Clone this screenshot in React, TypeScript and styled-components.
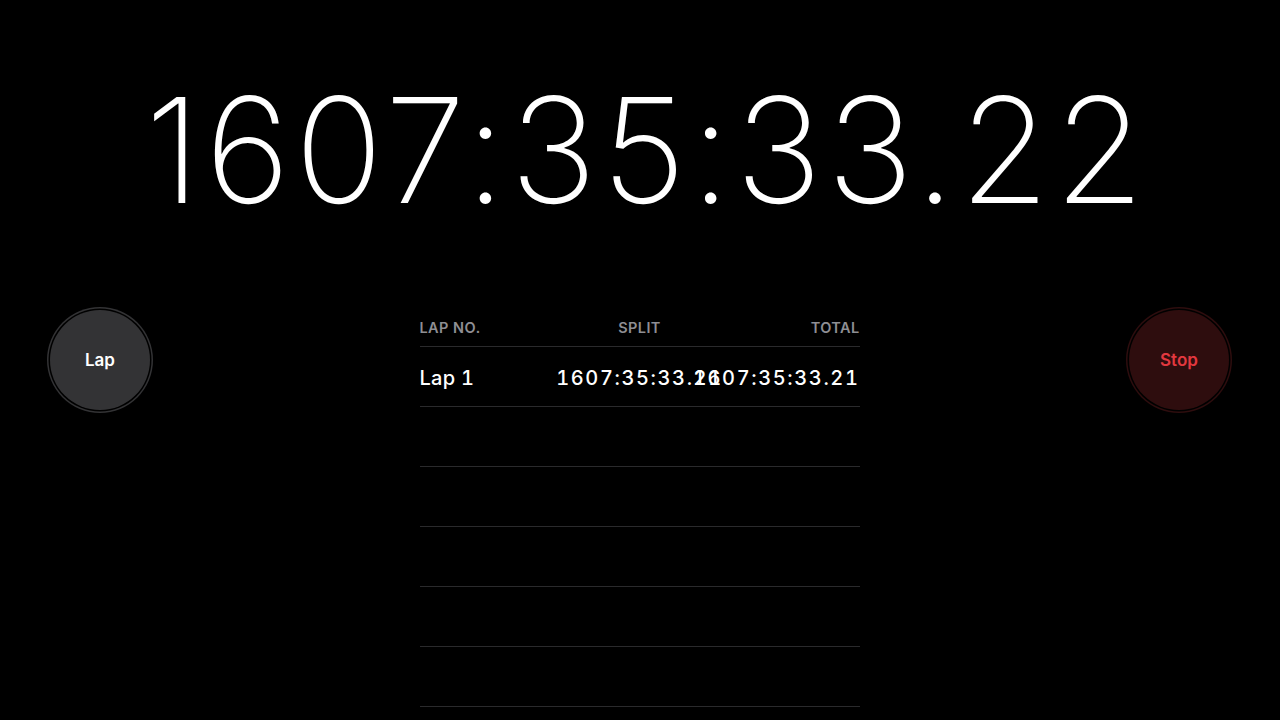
import React from "react";
import styled, { createGlobalStyle } from "styled-components";

const Global = createGlobalStyle`
  html, body { margin: 0; padding: 0; background: #000; }
  body { font-family: Inter, "Noto Sans", "Liberation Sans", sans-serif; color: #fff; }
  * { box-sizing: border-box; }
`;

const Page = styled.div`
  width: 1280px;
  height: 720px;
  overflow: hidden;
  display: flex;
  flex-direction: column;
  background: #000;
`;

const Timer = styled.div`
  padding-top: 77px;
  padding-left: 14px;
  height: 307px;
  display: flex;
  justify-content: center;
  font-size: 146px;
  line-height: 146px;
  font-weight: 200;
  letter-spacing: 4.6px;
  color: #fff;
  white-space: nowrap;
`;

const Controls = styled.div`
  display: grid;
  grid-template-columns: 1fr 440px 1fr;
  padding: 0 48px 0 47px;
  align-items: start;
`;

const RoundButton = styled.button<{ $variant: "lap" | "stop" }>`
  width: 100px;
  height: 100px;
  margin: 3px;
  border-radius: 50%;
  border: none;
  justify-self: ${(p) => (p.$variant === "lap" ? "start" : "end")};
  background: ${(p) => (p.$variant === "lap" ? "#333335" : "#2e0d0e")};
  box-shadow: 0 0 0 1.5px #000,
    0 0 0 3px ${(p) => (p.$variant === "lap" ? "#333335" : "#2e0d0e")};
  color: ${(p) => (p.$variant === "lap" ? "#fff" : "#e2383f")};
  font-family: Inter, "Noto Sans", sans-serif;
  font-size: 17px;
  font-weight: 600;
  padding: 0;
`;

const Table = styled.div`
  display: flex;
  flex-direction: column;
`;

const Row = styled.div<{ $header?: boolean }>`
  display: grid;
  grid-template-columns: repeat(3, minmax(0, 1fr));
  align-items: center;
  height: ${(p) => (p.$header ? "40px" : "60px")};
  border-bottom: 1px solid #2a2a2c;
  font-size: ${(p) => (p.$header ? "14.5px" : "20px")};
  font-weight: ${(p) => (p.$header ? 600 : 500)};
  letter-spacing: ${(p) => (p.$header ? "0.4px" : "1.6px")};
  color: ${(p) => (p.$header ? "#8e8e93" : "#fff")};
  font-variant-numeric: tabular-nums;
  white-space: nowrap;
`;

const Cell = styled.div<{ $align: "start" | "center" | "end" }>`
  display: flex;
  justify-content: ${(p) =>
    p.$align === "start" ? "flex-start" : p.$align === "end" ? "flex-end" : "center"};
  padding-top: 2px;
`;

const LapName = styled.span`
  letter-spacing: 0.3px;
`;

const laps = [{ name: "Lap 1", split: "1607:35:33.21", total: "1607:35:33.21" }];

export default function App() {
  const empty = 5;
  return (
    <>
      <Global />
      <Page>
        <Timer>1607:35:33.22</Timer>
        <Controls>
          <RoundButton $variant="lap">Lap</RoundButton>
          <Table>
            <Row $header>
              <Cell $align="start">LAP NO.</Cell>
              <Cell $align="center">SPLIT</Cell>
              <Cell $align="end">TOTAL</Cell>
            </Row>
            {laps.map((l) => (
              <Row key={l.name}>
                <Cell $align="start">
                  <LapName>{l.name}</LapName>
                </Cell>
                <Cell $align="center">{l.split}</Cell>
                <Cell $align="end">{l.total}</Cell>
              </Row>
            ))}
            {Array.from({ length: empty }).map((_, i) => (
              <Row key={i} />
            ))}
          </Table>
          <RoundButton $variant="stop">Stop</RoundButton>
        </Controls>
      </Page>
    </>
  );
}
